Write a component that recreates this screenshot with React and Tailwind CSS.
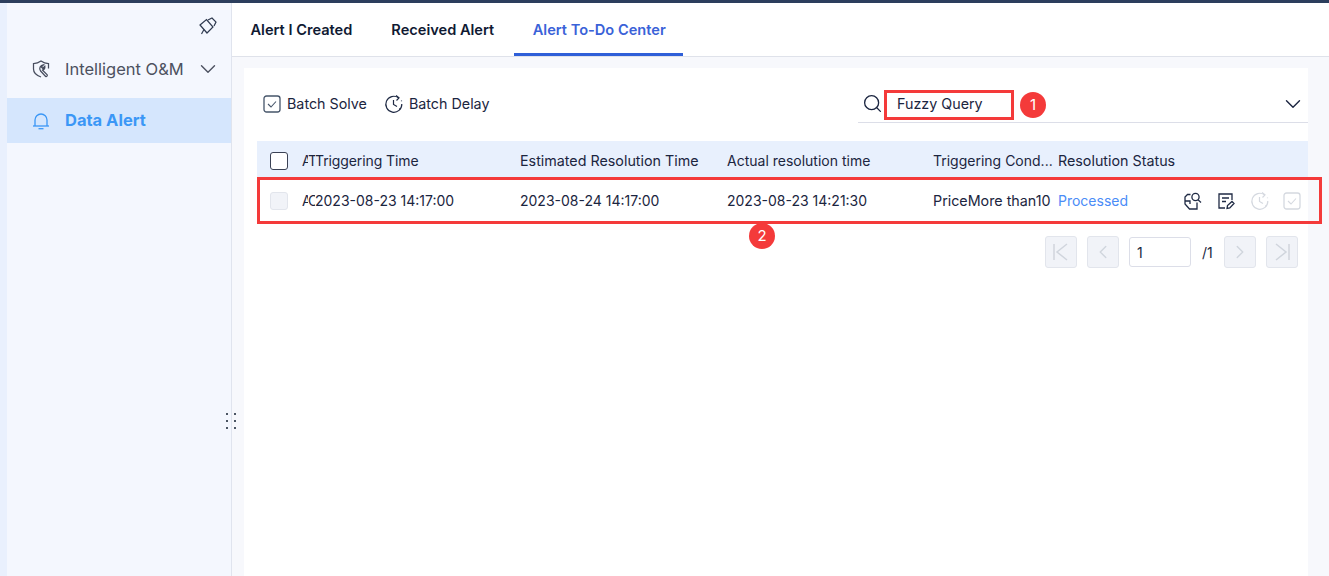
import React from 'react';
import { ChevronDown, Search, ChevronLeft, ChevronRight } from 'lucide-react';

function PinIcon() {
  return (
    <svg width="18" height="18" viewBox="0 0 18 18" fill="none" stroke="#2f3a50" strokeWidth="1.2">
      <path d="M1 8 L7.5 2.5 L14 10 L8 16 Z" />
      <path d="M9 3 L13 1 L17 5 L15 9" />
      <path d="M5 12.5 L2.5 17" />
    </svg>
  );
}

function WrenchShield() {
  return (
    <svg width="18" height="18" viewBox="0 0 18 18" fill="none" stroke="#474d5e" strokeWidth="1.25">
      <path d="M16.5 8.5 V3.5 C13.5 3.5 11 2.5 9 1 C7 2.5 4.5 3.5 1.5 3.5 V9 C1.5 12.5 4.5 15.5 9 17" />
      <path d="M11.5 4.8 L9.3 7 L10.7 8.4 L12.8 6.2 A3.6 3.6 0 0 1 10.6 10.2 L15.2 14.8 A1.2 1.2 0 0 1 13.6 16.4 L8.6 11 A3.8 3.8 0 0 1 11.5 4.8 Z" />
    </svg>
  );
}

function BellIcon() {
  return (
    <svg width="18" height="18" viewBox="0 0 18 18" fill="none" stroke="#3b97f6" strokeWidth="1.3">
      <path d="M3 14 V8 A6 6 0 0 1 15 8 V14" />
      <path d="M1 14 H17" />
      <path d="M6.5 16.7 H11.5" />
    </svg>
  );
}

function CheckBoxIcon({ color = '#46556a' }) {
  return (
    <svg width="18" height="18" viewBox="0 0 18 18" fill="none" stroke={color} strokeWidth="1.3">
      <rect x="1" y="1" width="16" height="16" rx="2.5" />
      <path d="M5 9 L8 12 L13 6.5" strokeWidth="1.1" />
    </svg>
  );
}

function DelayIcon({ color = '#1f2a44' }) {
  return (
    <svg width="20" height="20" viewBox="0 0 20 20" fill="none" stroke={color} strokeWidth="1.2">
      <path d="M14.5 3.8 A8 8 0 1 0 17.8 10" />
      <path d="M12 1.5 L15 3.8 L12.5 6.5" />
      <path d="M9.5 6 V10.5 L13 12.5" />
      <path d="M17.5 6.5 V7.2 M15.8 14.5 L15.4 15" />
    </svg>
  );
}

function ViewIcon() {
  return (
    <svg width="18" height="18" viewBox="0 0 18 18" fill="none" stroke="#1f2a44" strokeWidth="1.3">
      <path d="M6.5 2.5 H3.5 L1 5 V12 L5.5 17 H13 V10.5" />
      <path d="M1 9 H6 V12" />
      <circle cx="11.5" cy="5" r="3.6" />
      <path d="M14 7.8 L17 10.5" />
    </svg>
  );
}

function EditIcon() {
  return (
    <svg width="18" height="18" viewBox="0 0 18 18" fill="none" stroke="#1f2a44" strokeWidth="1.3">
      <path d="M15 8 V2 H2 V16 H8" />
      <path d="M5 6 H12 M5 9.5 H9" />
      <path d="M10 16.5 L10.5 13.5 L15 9.5 L17 11.5 L12.8 16 Z" />
    </svg>
  );
}

function SkipIcon({ last }) {
  return (
    <svg width="18" height="18" viewBox="0 0 18 18" fill="none" stroke="#d0d5dd" strokeWidth="1.5" className={last ? 'rotate-180' : ''}>
      <path d="M2 1 V17" />
      <path d="M15 1 L5 9 L15 17" />
    </svg>
  );
}

function PageButton({ children }) {
  return (
    <div className="flex h-8 w-8 items-center justify-center rounded-[3px] border border-[#e2e5ec] bg-[#f1f3f8]">
      {children}
    </div>
  );
}

function Tab({ label, active }) {
  return (
    <div className={`flex h-full items-center border-b-[3px] pt-[5px] text-[14.6px] font-semibold ${active ? 'border-[#2f5fd8] pl-[19px] pr-[17px] text-[#3a62d8]' : 'border-transparent px-[19.5px] text-[#101a33]'}`}>
      {label}
    </div>
  );
}

// first column is squeezed in the original, only part of the text shows
function ClippedCell({ text }) {
  return (
    <div className="flex overflow-hidden">
      <span className="w-[6px] shrink-0 overflow-hidden">A</span>
      <span className="shrink-0">{text}</span>
    </div>
  );
}

export default function App() {
  return (
    <div className="flex h-[576px] w-[1329px] flex-col overflow-hidden bg-white font-['Inter',sans-serif] text-[14px] text-[#1b2540]">
      <div className="h-[3px] shrink-0 bg-[#2c3e5d]" />
      <div className="relative flex min-h-0 flex-1">
        {/* sidebar */}
        <aside className="w-[232px] shrink-0 border-r border-[#e0e4ee] bg-[#e9f0fd] pl-[7px]">
          <div className="h-full bg-[#f4f7fe]">
            <div className="flex h-[40px] items-center justify-end pr-[14px] pt-[6px]">
              <PinIcon />
            </div>
            <div className="flex h-[52px] items-center pl-[25px] pr-[10px] text-[16.5px] text-[#4c5160]">
              <WrenchShield />
              <span className="ml-[15px] flex-1">Intelligent O&amp;M</span>
              <ChevronDown size={26} strokeWidth={1.3} />
            </div>
            <div className="mt-[3px] flex h-[45px] items-center bg-[#d5e6fd] pl-[25px] text-[16.5px] font-bold text-[#3b97f6]">
              <BellIcon />
              <span className="ml-[15px]">Data Alert</span>
            </div>
          </div>
        </aside>
        <div className="absolute left-[226px] top-[410px] grid grid-cols-2 gap-x-[6px] gap-y-[5px]">
          {[0, 1, 2, 3, 4, 5].map((i) => (
            <div key={i} className="h-[2px] w-[2px] bg-[#4b5563]" />
          ))}
        </div>

        {/* main */}
        <main className="flex min-w-0 flex-1 flex-col bg-[#f7f8fc]">
          <div className="flex h-[54px] shrink-0 items-stretch border-b border-[#dfe2ea] bg-white">
            <div className="-ml-[1px] flex h-full">
              <Tab label="Alert I Created" />
              <Tab label="Received Alert" />
              <Tab label="Alert To-Do Center" active />
            </div>
          </div>
          <div className="ml-3 mr-[21px] mt-[11px] flex-1 bg-white pl-[13px]">
            {/* toolbar */}
            <div className="flex h-[73px] items-start pt-[17px]">
              <div className="flex h-[38px] w-[601px] items-center">
                <div className="ml-[6px] flex items-center gap-[6px]">
                  <CheckBoxIcon />
                  <span className="text-[14.3px]">Batch Solve</span>
                </div>
                <div className="ml-[17px] flex items-center gap-[5px]">
                  <DelayIcon />
                  <span className="text-[14.3px]">Batch Delay</span>
                </div>
              </div>
              <div className="flex h-[38px] flex-1 items-center border-b border-[#dcdee8] pl-[4px] pr-[2px]">
                <Search size={21} strokeWidth={1.5} />
                <span className="ml-[14px] flex-1 text-[14.3px]">Fuzzy Query</span>
                <ChevronDown size={26} strokeWidth={1.3} />
              </div>
            </div>

            {/* table */}
            <div className="grid h-[39px] grid-cols-[45px_13px_205px_207px_206px_125px_1fr] items-center bg-[#e8f0fd]">
              <div className="flex justify-start pl-[13px]">
                <div className="h-[18px] w-[18px] rounded-[3px] border border-[#3a4154] bg-white" />
              </div>
              <ClippedCell text="T" />
              <span className="tracking-[-0.1px]">Triggering Time</span>
              <span className="text-[14.3px]">Estimated Resolution Time</span>
              <span>Actual resolution time</span>
              <span className="truncate pr-[4px]">Triggering Cond...</span>
              <span className="text-[14.3px]">Resolution Status</span>
            </div>
            <div className="grid h-[41px] grid-cols-[45px_13px_205px_207px_206px_125px_1fr] items-center">
              <div className="flex justify-start pl-[13px]">
                <div className="h-[18px] w-[18px] rounded-[3px] border border-[#e2e5ec] bg-[#f1f3f8]" />
              </div>
              <ClippedCell text="C" />
              <span>2023-08-23 14:17:00</span>
              <span>2023-08-24 14:17:00</span>
              <span>2023-08-23 14:21:30</span>
              <span className="overflow-hidden whitespace-nowrap text-[14.3px]">PriceMore than10</span>
              <div className="flex items-center">
                <span className="w-[126px] text-[#4a8cf7]">Processed</span>
                <div className="flex items-center">
                  <ViewIcon />
                  <div className="ml-[15px]"><EditIcon /></div>
                  <div className="ml-[15px]"><DelayIcon color="#d5d9e0" /></div>
                  <div className="ml-[13px]"><CheckBoxIcon color="#d5d9e0" /></div>
                </div>
              </div>
            </div>

            {/* pagination */}
            <div className="mt-[15px] flex items-center justify-end pr-[10px]">
              <PageButton><SkipIcon /></PageButton>
              <div className="ml-[10px]"><PageButton><ChevronLeft size={22} strokeWidth={1.5} color="#d0d5dd" /></PageButton></div>
              <div className="ml-[10px] flex h-[30px] w-[62px] items-center rounded-[3px] border border-[#dcdee8] pl-[7px]">1</div>
              <span className="ml-[11px] w-[22px]">/1</span>
              <PageButton><ChevronRight size={22} strokeWidth={1.5} color="#d0d5dd" /></PageButton>
              <div className="ml-[10px]"><PageButton><SkipIcon last /></PageButton></div>
            </div>
          </div>
        </main>

        {/* annotations */}
        <div className="absolute left-[884px] top-[87px] h-[30px] w-[130px] border-[3px] border-[#f43a3a]" />
        <div className="absolute left-[1020px] top-[89px] flex h-[26px] w-[26px] items-center justify-center rounded-full bg-[#f43a3a] text-[15px] text-white">1</div>
        <div className="absolute left-[257px] top-[174px] h-[47px] w-[1065px] border-[3px] border-[#f43a3a]" />
        <div className="absolute left-[749px] top-[220px] flex h-[26px] w-[26px] items-center justify-center rounded-full bg-[#f43a3a] text-[15px] text-white">2</div>
      </div>
    </div>
  );
}
